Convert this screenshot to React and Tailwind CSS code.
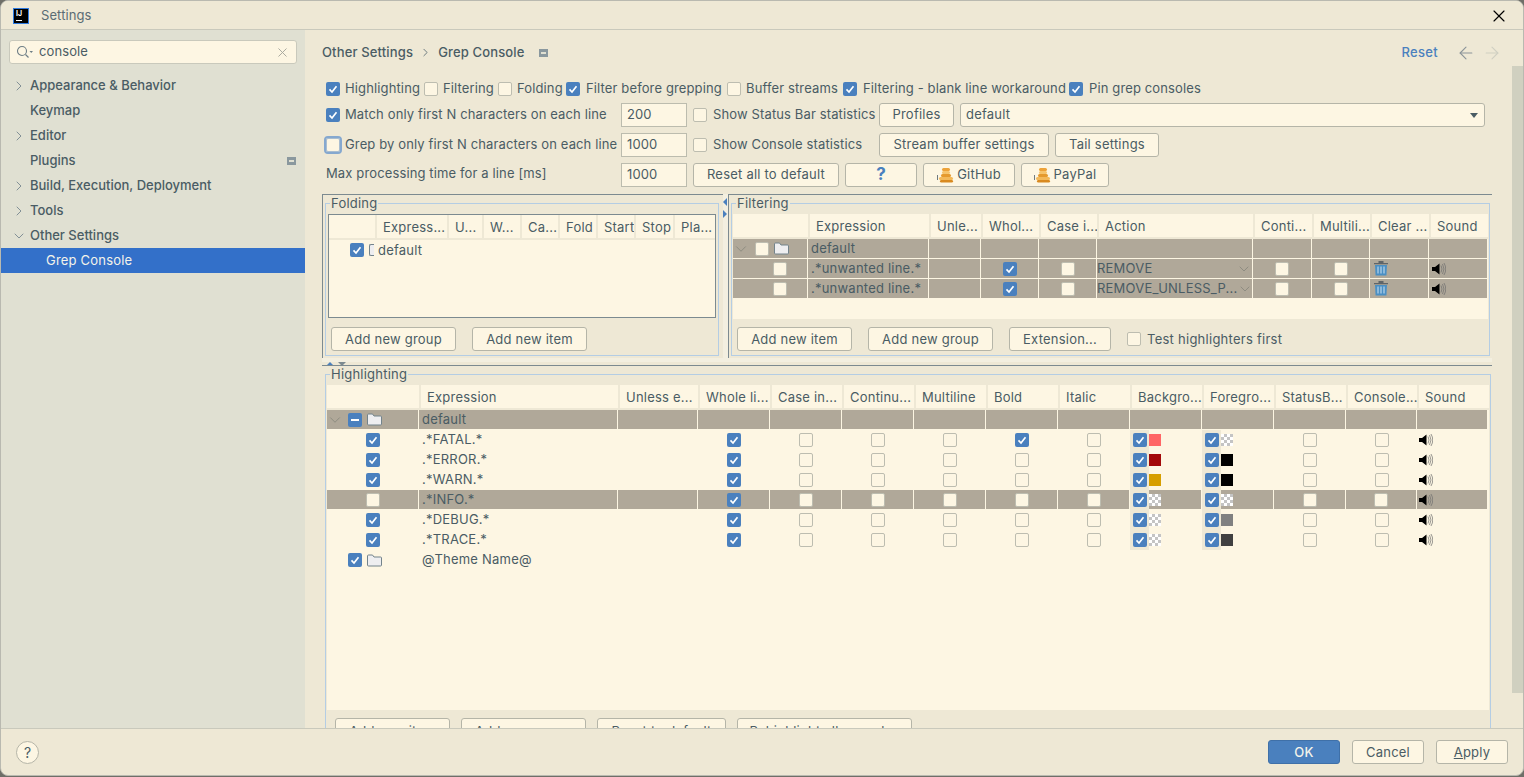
import { X, ChevronRight, ChevronDown, ArrowLeft, ArrowRight } from 'lucide-react';

// --- Small drawings ---
const Tick = () => (
  <svg viewBox="0 0 14 14" className="w-[14px] h-[14px]">
    <path d="M3.5 7.4 L6 10 L10.5 4.2" fill="none" stroke="#ffffff" strokeWidth="1.7" />
  </svg>
);

const Box = ({ on, dash, focus }) => {
  if (on) {
    return (
      <span className="block w-[14px] h-[14px] shrink-0 rounded-[2px] bg-[#4a80be]">
        <Tick />
      </span>
    );
  }
  if (dash) {
    return (
      <span className="flex items-center justify-center w-[14px] h-[14px] shrink-0 rounded-[2px] bg-[#4a80be]">
        <span className="block w-[8px] h-[2px] bg-white" />
      </span>
    );
  }
  if (focus) {
    return <span className="block w-[14px] h-[14px] shrink-0 rounded-[2px] bg-[#fdf6e3] border border-[#a9bdd0] outline-2 outline-[#85a8cf]" />;
  }
  return <span className="block w-[14px] h-[14px] shrink-0 rounded-[2px] bg-[#fdf6e3] border border-[#bdbdb0]" />;
};

const Folder = () => (
  <svg viewBox="0 0 15 13" className="w-[15px] h-[13px] shrink-0">
    <path d="M0.5 2 Q0.5 1 1.5 1 H5.5 L7 3 H13.5 Q14.5 3 14.5 4 V11 Q14.5 12 13.5 12 H1.5 Q0.5 12 0.5 11 Z" fill="#eeeef0" stroke="#73838b" />
  </svg>
);

const Speaker = () => (
  <svg viewBox="0 0 14 14" className="w-[14px] h-[14px]">
    <path d="M0 5 H3 L7.5 1.5 V12.5 L3 9 H0 Z" fill="#000000" />
    <path d="M9 3.5 Q11 7 9 10.5 M10.5 2 Q13.5 7 10.5 12 M12 1 Q15.5 7 12 13" fill="none" stroke="#6f6f6f" strokeWidth="0.7" />
  </svg>
);

const Trash = () => (
  <svg viewBox="0 0 14 16" className="w-[14px] h-[16px] -mt-[2px]">
    <path d="M0 3 H14 V4.2 H0 Z M4.5 1 H9.5 V3 H4.5 Z" fill="#5f6468" />
    <path d="M1 5 H13 L12.4 15.5 H1.6 Z" fill="#4a8fc4" />
    <path d="M4 6.5 V13.5 M7 6.5 V13.5 M10 6.5 V13.5" stroke="#cfe3f1" strokeWidth="1" />
  </svg>
);

const Coins = () => (
  <svg viewBox="0 0 17 16" className="w-[17px] h-[16px] shrink-0">
    <path d="M0.5 8 V13" stroke="#6f7a80" strokeWidth="1" />
    <rect x="5" y="1" width="8" height="3" rx="1.5" fill="#eda33a" />
    <rect x="5" y="4" width="8" height="3" rx="1.5" fill="#f6c46c" />
    <rect x="4" y="7" width="10" height="3" rx="1.5" fill="#e59a2e" />
    <rect x="2" y="10" width="14" height="3" rx="1.5" fill="#f3b95a" />
    <rect x="3" y="13" width="13" height="2.5" rx="1.2" fill="#d98a20" />
  </svg>
);

const Badge = () => (
  <span className="flex items-center justify-center w-[9px] h-[8px] bg-[#8a989e]">
    <span className="block w-[5px] h-[2px] bg-[#e0e0d2]" />
  </span>
);

const Btn = ({ className, children }) => (
  <button type="button" className={`flex items-center justify-center shrink-0 h-[24px] pt-[2px] rounded-[3px] border border-[#b5b5a8] bg-[#fdf6e3] text-[13px] tracking-[0.22px] ${className}`}>
    {children}
  </button>
);

const Input = ({ value }) => (
  <span className="flex items-center shrink-0 w-[66px] h-[24px] pl-[5px] border border-[#bcbcae] bg-[#fdf6e3] text-[13px] tracking-[0.1px]">{value}</span>
);

const Opt = ({ label, on, focus, className, labelPad = '', track = 'tracking-[0.13px]' }) => (
  <span className={`flex items-center gap-[5px] shrink-0 text-[13px] whitespace-nowrap ${track} ${className}`}>
    <Box on={on} focus={focus} />
    <span className={labelPad}>{label}</span>
  </span>
);

// --- Sidebar ---
const nav = [
  { label: 'Appearance & Behavior', arrow: true },
  { label: 'Keymap' },
  { label: 'Editor', arrow: true },
  { label: 'Plugins', badge: true },
  { label: 'Build, Execution, Deployment', arrow: true },
  { label: 'Tools', arrow: true },
  { label: 'Other Settings', open: true },
];

const Sidebar = () => (
  <aside className="flex flex-col shrink-0 w-[304px] bg-[#e0e0d2]">
    <div className="flex items-center h-[24px] mt-[10px] ml-[8px] mr-[8px] px-[6px] rounded-[3px] border border-[#c9c9bc] bg-[#fdf6e3] text-[13px] tracking-[0.1px]">
      <svg viewBox="0 0 18 14" className="w-[18px] h-[14px] shrink-0">
        <circle cx="6" cy="6" r="4.5" fill="none" stroke="#6e7e86" strokeWidth="1.1" />
        <path d="M9.5 9.5 L12.5 12.5" stroke="#6e7e86" strokeWidth="1.2" />
        <path d="M13.5 6 H17 L15.25 8 Z" fill="#6e7e86" />
      </svg>
      <span className="ml-[5px]">console</span>
      <X className="ml-auto text-[#a6a69c]" size={15} strokeWidth={1.5} />
    </div>
    <div className="mt-[9px] flex flex-col">
      {nav.map((n) => (
        <div key={n.label} className="flex items-center h-[25px] pl-[13px] pr-[9px] text-[13px] font-medium">
          <span className="flex items-center w-[16px] text-[#7b8a91]">
            {n.arrow && <ChevronRight className="shrink-0 -ml-[3px]" size={16} strokeWidth={1.4} />}
            {n.open && <ChevronDown className="shrink-0 -ml-[3px]" size={16} strokeWidth={1.4} />}
          </span>
          <span>{n.label}</span>
          {n.badge && <span className="ml-auto"><Badge /></span>}
        </div>
      ))}
      <div className="flex items-center h-[25px] pl-[45px] bg-[#3370c9] text-[#f3f3ea] text-[13px] tracking-[0.2px]">Grep Console</div>
    </div>
  </aside>
);

// --- Top options ---
const TopForm = () => (
  <div className="flex flex-col pl-[21px]">
    <div className="flex items-center h-[45px] -ml-[4px] text-[13px] font-medium tracking-[0.15px]">
      <span>Other Settings</span>
      <ChevronRight className="mx-[6px] text-[#5a6c74]" size={13} strokeWidth={1.6} />
      <span>Grep Console</span>
      <span className="ml-[14px]"><Badge /></span>
      <span className="ml-auto mr-[18px] text-[#4a80be] tracking-[0.3px]">Reset</span>
      <ArrowLeft className="text-[#8b9499]" size={20} strokeWidth={1.3} />
      <ArrowRight className="ml-[6px] mr-[10px] text-[#cfcfc2]" size={20} strokeWidth={1.3} />
    </div>
    <div className="flex items-center h-[20px] mt-[4px]">
      <Opt className="w-[98px]" on label="Highlighting" />
      <Opt className="w-[74px]" label="Filtering" />
      <Opt className="w-[68px]" label="Folding" />
      <Opt className="w-[161px] gap-[6px]" on label="Filter before grepping" />
      <Opt className="w-[116px]" label="Buffer streams" />
      <Opt className="w-[226px] gap-[6px]" on label="Filtering - blank line workaround" />
      <Opt className="gap-[6px]" on label="Pin grep consoles" />
    </div>
    <div className="flex items-center h-[24px] mt-[4px]">
      <Opt className="w-[295px]" on label="Match only first N characters on each line" />
      <Input value="200" />
      <Opt className="w-[186px] ml-[6px] gap-[6px]" label="Show Status Bar statistics" />
      <Btn className="w-[75px] !pt-0">Profiles</Btn>
      <span className="flex items-center shrink-0 w-[525px] h-[24px] ml-[6px] pl-[5px] pr-[6px] rounded-[3px] border border-[#b5b5a8] bg-[#fdf6e3] text-[13px] tracking-[0.2px]">
        default
        <span className="ml-auto w-0 h-0 border-x-[4px] border-x-transparent border-t-[5px] border-t-[#4a5c64]" />
      </span>
    </div>
    <div className="flex items-center h-[24px] mt-[6px]">
      <Opt className="w-[295px]" focus label="Grep by only first N characters on each line" />
      <Input value="1000" />
      <Opt className="w-[186px] ml-[6px] gap-[6px]" label="Show Console statistics" />
      <Btn className="w-[170px] !pt-0">Stream buffer settings</Btn>
      <Btn className="w-[104px] ml-[6px] !pt-0">Tail settings</Btn>
    </div>
    <div className="flex items-center h-[24px] mt-[6px]">
      <span className="w-[295px] shrink-0 mb-[2px] text-[13px] tracking-[0.13px]">Max processing time for a line [ms]</span>
      <Input value="1000" />
      <Btn className="w-[146px] ml-[6px] !pt-0">Reset all to default</Btn>
      <Btn className="w-[72px] ml-[6px] !pt-0 text-[#4a80be] font-bold text-[17px]">?</Btn>
      <Btn className="w-[92px] ml-[6px] gap-[3px] !pt-0"><Coins />GitHub</Btn>
      <Btn className="w-[88px] ml-[6px] gap-[3px] !pt-0"><Coins />PayPal</Btn>
    </div>
  </div>
);

// --- Tables ---
const Head = ({ children, pad = '' }) => (
  <div className={`flex items-center h-full min-w-0 pl-[6px] border-l-2 border-[#eee8d5] overflow-hidden whitespace-nowrap ${pad}`}>{children}</div>
);

const Cell = ({ children, center, sel, className = '' }) => (
  <div className={`flex items-center h-[20px] min-w-0 ${center ? 'justify-center' : ''} ${sel ? 'bg-[#b0a899] border-r border-b border-[#fdf6e3]' : ''} ${className}`}>{children}</div>
);

const FoldingPanel = () => (
  <div className="w-[401px] shrink-0 h-[164px] pl-[2px] border-l border-t border-[#7c8a90]">
    <fieldset className="w-[394px] h-[161px] border border-[#b4cde4] text-[13px] tracking-[0.22px]">
      <legend className="ml-[4px] px-[1px] h-[16px] leading-[16px]">Folding</legend>
      <div className="mx-[2px] mt-[3px] h-[104px] border border-[#7c8a90] bg-[#fdf6e3]">
        <div className="grid grid-cols-[46px_72px_35px_38px_38px_38px_38px_39px_42px] h-[25px] border-b-2 border-[#eee8d5]">
          <div />
          <Head pad="pt-[2px]">Express...</Head>
          <Head pad="pt-[2px]">U...</Head>
          <Head pad="pt-[2px]">W...</Head>
          <Head pad="pt-[2px]">Ca...</Head>
          <Head pad="pt-[2px]">Fold</Head>
          <Head pad="pt-[2px]">Start</Head>
          <Head pad="pt-[2px]">Stop</Head>
          <Head pad="pt-[2px]">Pla...</Head>
        </div>
        <div className="flex items-center h-[20px] pl-[21px]">
          <Box on />
          <span className="block w-[5px] h-[12px] ml-[5px] rounded-l-[2px] border border-r-0 border-[#73838b] bg-[#eeeef0]" />
          <span className="ml-[4px] mt-[2px]">default</span>
        </div>
      </div>
      <div className="flex gap-[16px] mt-[9px] ml-[5px]">
        <Btn className="w-[125px]">Add new group</Btn>
        <Btn className="w-[115px]">Add new item</Btn>
      </div>
    </fieldset>
  </div>
);

const filterCols = 'grid grid-cols-[75px_121px_52px_58px_58px_156px_59px_58px_59px_59px]';

const FilterRow = ({ action }) => (
  <div className={filterCols}>
    <Cell sel><span className="ml-[40px]"><Box /></span></Cell>
    <Cell sel className="pl-[3px]">.*unwanted line.*</Cell>
    <Cell sel />
    <Cell sel center><Box on /></Cell>
    <Cell sel center><Box /></Cell>
    <Cell sel className="justify-between">
      <span>{action}</span>
      <ChevronDown className="shrink-0 text-[#85857b]" size={16} strokeWidth={1.2} />
    </Cell>
    <Cell sel center><Box /></Cell>
    <Cell sel center><Box /></Cell>
    <Cell sel className="pl-[4px]"><Trash /></Cell>
    <Cell sel className="pl-[3px]"><Speaker /></Cell>
  </div>
);

const FilteringPanel = () => (
  <div className="w-[764px] shrink-0 h-[164px] pl-[2px] border-l border-t border-[#7c8a90]">
    <fieldset className="w-[759px] h-[161px] border border-[#b4cde4] text-[13px] tracking-[0.22px]">
      <legend className="ml-[4px] px-[1px] h-[16px] leading-[16px]">Filtering</legend>
      <div className="mx-[1px] mt-[3px] h-[105px] bg-[#fdf6e3]">
        <div className={`${filterCols} h-[25px] border-b-2 border-[#eee8d5]`}>
          <div />
          <Head pad="pt-[3px]">Expression</Head>
          <Head pad="pt-[3px]">Unle...</Head>
          <Head pad="pt-[3px]">Whol...</Head>
          <Head pad="pt-[3px]">Case i...</Head>
          <Head pad="pt-[3px]">Action</Head>
          <Head pad="pt-[3px]">Conti...</Head>
          <Head pad="pt-[3px]">Multili...</Head>
          <Head pad="pt-[3px]">Clear ...</Head>
          <Head pad="pt-[3px]">Sound</Head>
        </div>
        <div className={filterCols}>
          <Cell sel>
            <ChevronDown className="shrink-0 -ml-[1px] text-[#85857b]" size={18} strokeWidth={1.1} />
            <span className="ml-[5px]"><Box /></span>
            <span className="ml-[5px]"><Folder /></span>
          </Cell>
          <Cell sel className="pl-[3px]">default</Cell>
          <Cell sel /><Cell sel /><Cell sel /><Cell sel /><Cell sel /><Cell sel /><Cell sel /><Cell sel />
        </div>
        <FilterRow action="REMOVE" />
        <FilterRow action="REMOVE_UNLESS_P..." />
      </div>
      <div className="flex items-center mt-[8px] ml-[5px]">
        <Btn className="w-[115px]">Add new item</Btn>
        <Btn className="w-[125px] ml-[16px]">Add new group</Btn>
        <Btn className="w-[102px] ml-[16px]">Extension...</Btn>
        <span className="ml-[16px]"><Opt className="gap-[6px]" labelPad="pt-[2px]" track="tracking-[0.26px]" label="Test highlighters first" /></span>
      </div>
    </fieldset>
  </div>
);

const hlCols = 'grid grid-cols-[92px_199px_80px_72px_72px_72px_72px_72px_72px_72px_72px_72px_71px_71px]';

const hlRows = [
  { name: '.*FATAL.*', on: true, bold: true, bg: 'bg-[#ff6666]', fg: 'check' },
  { name: '.*ERROR.*', on: true, bg: 'bg-[#a30808]', fg: 'bg-black' },
  { name: '.*WARN.*', on: true, bg: 'bg-[#d69e00]', fg: 'bg-black' },
  { name: '.*INFO.*', sel: true, bg: 'check', fg: 'check' },
  { name: '.*DEBUG.*', on: true, bg: 'check', fg: 'bg-[#808080]' },
  { name: '.*TRACE.*', on: true, bg: 'check', fg: 'bg-[#404040]' },
];

const Swatch = ({ kind }) => (
  <span className={`block w-[12px] h-[12px] ${kind === 'check' ? 'bg-[repeating-conic-gradient(#c4c4c4_0_25%,#ffffff_0_50%)] bg-[length:6px_6px]' : kind}`} />
);

const ColorCell = ({ kind, sel }) => (
  <Cell sel={sel}>
    <span className="flex items-center justify-center w-[19px] h-[20px] bg-[#eee8d5]"><Box on /></span>
    <Swatch kind={kind} />
  </Cell>
);

const HlRow = ({ r }) => (
  <div className={hlCols}>
    <Cell sel={r.sel} className="pl-[39px]">{r.on ? <Box on /> : <Box />}</Cell>
    <Cell sel={r.sel} className="pl-[3px]">{r.name}</Cell>
    <Cell sel={r.sel} />
    <Cell sel={r.sel} center><Box on /></Cell>
    <Cell sel={r.sel} center><Box /></Cell>
    <Cell sel={r.sel} center><Box /></Cell>
    <Cell sel={r.sel} center><Box /></Cell>
    <Cell sel={r.sel} center><Box on={r.bold} /></Cell>
    <Cell sel={r.sel} center><Box /></Cell>
    <ColorCell kind={r.bg} sel={r.sel} />
    <ColorCell kind={r.fg} sel={r.sel} />
    <Cell sel={r.sel} center><Box /></Cell>
    <Cell sel={r.sel} center><Box /></Cell>
    <Cell sel={r.sel} className="pl-[2px]"><Speaker /></Cell>
  </div>
);

const HighlightingPanel = () => (
  <fieldset className="w-[1166px] h-[370px] ml-[3px] border border-[#b4cde4] text-[13px] tracking-[0.22px]">
    <legend className="ml-[4px] px-[1px] h-[16px] leading-[16px]">Highlighting</legend>
    <div className="mx-[1px] mt-[3px] h-[325px] bg-[#fdf6e3]">
      <div className={`${hlCols} h-[25px] border-b-2 border-[#eee8d5]`}>
        <div />
        <Head pad="pt-[2px]">Expression</Head>
        <Head pad="pt-[2px]">Unless e...</Head>
        <Head pad="pt-[2px]">Whole li...</Head>
        <Head pad="pt-[2px]">Case in...</Head>
        <Head pad="pt-[2px]">Continu...</Head>
        <Head pad="pt-[2px]">Multiline</Head>
        <Head pad="pt-[2px]">Bold</Head>
        <Head pad="pt-[2px]">Italic</Head>
        <Head pad="pt-[2px]">Backgro...</Head>
        <Head pad="pt-[2px]">Foregro...</Head>
        <Head pad="pt-[2px]">StatusB...</Head>
        <Head pad="pt-[2px]">Console...</Head>
        <Head pad="pt-[2px]">Sound</Head>
      </div>
      <div className={hlCols}>
        <Cell sel>
          <ChevronDown className="shrink-0 -ml-[1px] text-[#85857b]" size={18} strokeWidth={1.1} />
          <span className="ml-[4px]"><Box dash /></span>
          <span className="ml-[5px]"><Folder /></span>
        </Cell>
        <Cell sel className="pl-[3px]">default</Cell>
        <Cell sel /><Cell sel /><Cell sel /><Cell sel /><Cell sel /><Cell sel /><Cell sel /><Cell sel /><Cell sel /><Cell sel /><Cell sel /><Cell sel />
      </div>
      {hlRows.map((r) => <HlRow key={r.name} r={r} />)}
      <div className={hlCols}>
        <Cell className="pl-[21px]">
          <Box on />
          <span className="ml-[5px]"><Folder /></span>
        </Cell>
        <Cell className="pl-[3px]">@Theme Name@</Cell>
      </div>
    </div>
    <div className="flex gap-[11px] mt-[8px] ml-[9px]">
      <Btn className="w-[115px] !pt-[4px]">Add new item</Btn>
      <Btn className="w-[125px] !pt-[4px]">Add new group</Btn>
      <Btn className="w-[129px] !pt-[4px]">Reset to default</Btn>
      <Btn className="w-[175px] !pt-[4px]">Rehighlight all consoles</Btn>
    </div>
  </fieldset>
);

function App() {
  return (
    <div className="w-[1524px] h-[777px] overflow-hidden bg-[#6f6f68] font-['Inter',sans-serif] text-[#4a5c64]">
      <div className="flex flex-col w-[1524px] h-[776px] rounded-lg overflow-hidden border border-[#b9b9b0] bg-[#eee8d5]">
        <header className="flex items-center shrink-0 h-[29px] pt-[1px] pl-[12px] pr-[14px] border-b border-[#c9c9bc] bg-[#eee8d5]">
          <span className="flex flex-col w-[16px] h-[16px] bg-black border border-[#2f7be0] pl-[2px] pt-[1px] text-white text-[7px] font-bold leading-[8px]">
            IJ
            <span className="block w-[6px] h-[1px] mt-[2px] bg-white" />
          </span>
          <span className="ml-[12px] text-[13px] tracking-[0.1px] text-[#5a6c74]">Settings</span>
          <X className="ml-auto text-black" size={20} strokeWidth={1.4} />
        </header>

        <div className="flex flex-1 min-h-0">
          <Sidebar />
          <main className="flex-1 min-w-0 overflow-hidden">
            <TopForm />
            <div className="flex mt-[7px] ml-[17px]">
              <FoldingPanel />
              <div className="flex flex-col gap-[4px] shrink-0 w-[5px] h-[164px] pt-[4px] bg-[#f3efe0]">
                <span className="block w-0 h-0 border-y-[4px] border-y-transparent border-r-[4px] border-r-[#4a80be]" />
                <span className="block w-0 h-0 border-y-[4px] border-y-transparent border-l-[4px] border-l-[#4a80be]" />
              </div>
              <FilteringPanel />
            </div>
            <div className="w-[1170px] h-[4px] ml-[17px] bg-[#f3efe0]" />
            <div className="flex gap-[4px] h-[3px] ml-[21px] overflow-hidden">
              <span className="block w-0 h-0 border-x-[4px] border-x-transparent border-b-[4px] border-b-[#4a80be]" />
              <span className="block w-0 h-0 border-x-[4px] border-x-transparent border-t-[4px] border-t-[#7c8a90]" />
            </div>
            <div className="w-[1170px] ml-[17px] border-t border-[#7c8a90]">
              <HighlightingPanel />
            </div>
          </main>
          <div className="shrink-0 w-[11px] mt-[36px] mb-[35px] bg-[#d0d0c0]" />
        </div>

        <footer className="flex items-center shrink-0 h-[47px] pl-[15px] pr-[15px] border-t border-[#c9c9bc]">
          <span className="flex items-center justify-center w-[23px] h-[23px] rounded-full border border-[#b5b5a8] bg-[#fdf6e3] text-[14px]">?</span>
          <Btn className="w-[72px] ml-auto !bg-[#4a80be] !border-[#3f70a8] !text-[#f3f3ea] font-medium">OK</Btn>
          <Btn className="w-[72px] ml-[12px]">Cancel</Btn>
          <Btn className="w-[72px] ml-[12px]"><span><span className="underline">A</span>pply</span></Btn>
        </footer>
      </div>
    </div>
  );
}

export default App;
